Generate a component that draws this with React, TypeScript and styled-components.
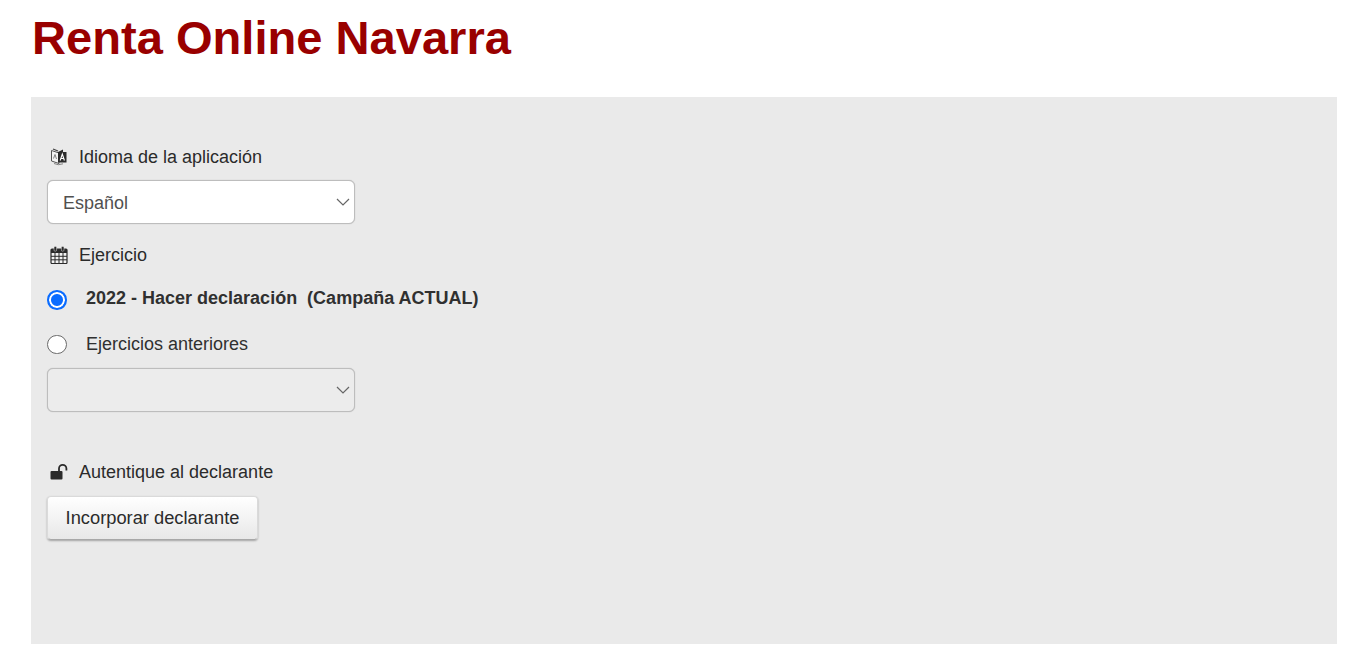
import React from 'react';
import styled, { createGlobalStyle } from 'styled-components';

const GlobalStyle = createGlobalStyle`
  html, body {
    margin: 0;
    padding: 0;
    background: #ffffff;
    font-family: "Liberation Sans", Arial, sans-serif;
    overflow: hidden;
  }
`;

const Page = styled.div`
  height: 654px;
  padding: 0 29px 10px 31px;
  box-sizing: border-box;
  display: flex;
  flex-direction: column;
`;

const Title = styled.h1`
  margin: 0;
  height: 97px;
  padding: 10px 0 0 1px;
  box-sizing: border-box;
  color: #990000;
  font-size: 47.1px;
  line-height: 56px;
  font-weight: 700;
`;

const Panel = styled.main`
  flex: 1;
  background: #eaeaea;
  padding: 47px 16px 0;
  display: flex;
  flex-direction: column;
  align-items: flex-start;
`;

const Label = styled.div<{ $top?: number }>`
  display: flex;
  align-items: center;
  height: 26px;
  margin-top: ${(p) => p.$top ?? 0}px;
  color: #2b2b2b;
  font-size: 18px;
`;

const LabelIcon = styled.span`
  width: 32px;
  display: flex;
  justify-content: center;
  padding-right: 8px;
  box-sizing: border-box;
`;

const SelectWrap = styled.div<{ $top: number }>`
  position: relative;
  width: 308px;
  height: 44px;
  margin-top: ${(p) => p.$top}px;
`;

const Select = styled.select`
  appearance: none;
  width: 100%;
  height: 100%;
  box-sizing: border-box;
  padding: 2px 15px 0;
  border: 1px solid #bdbdbd;
  border-radius: 6px;
  background: #ffffff;
  box-shadow: 0 0 1px rgba(0, 0, 0, 0.25);
  color: #505050;
  font-family: inherit;
  font-size: 18px;
  opacity: 1;

  &:disabled {
    background: #ececec;
    color: #505050;
  }
`;

const Chevron = styled.svg`
  position: absolute;
  top: 18px;
  right: 5px;
  pointer-events: none;
`;

const RadioRow = styled.label<{ $top: number; $bold?: boolean }>`
  display: flex;
  align-items: center;
  height: 26px;
  margin-top: ${(p) => p.$top}px;
  color: #303030;
  font-size: 18px;
  font-weight: ${(p) => (p.$bold ? 700 : 400)};
  white-space: pre;
`;

const Radio = styled.input<{ $drop: number }>`
  appearance: none;
  width: 19.5px;
  height: 19.5px;
  margin: ${(p) => p.$drop}px 19.5px 0 0;
  box-sizing: border-box;
  border: 1px solid #6a6a6a;
  border-radius: 50%;
  background: #ffffff;

  &:checked {
    border: 2px solid #0a6cff;
    box-shadow: inset 0 0 0 2px #ffffff;
    background: #0a6cff;
  }
`;

const Button = styled.button`
  margin-top: 11px;
  width: 211px;
  height: 44px;
  padding: 0;
  border: 1px solid #dadada;
  border-bottom-color: #a8a8a8;
  border-radius: 4px;
  background: linear-gradient(#ffffff, #e8e8e8);
  box-shadow: 0 1px 2px rgba(0, 0, 0, 0.3);
  color: #2b2b2b;
  font-family: inherit;
  font-size: 18.3px;
`;

const SelectArrow = () => (
  <Chevron width="14" height="8" viewBox="0 0 14 8" fill="none" stroke="#666" strokeWidth="1.2">
    <path d="M1 1 L7 7 L13 1" />
  </Chevron>
);

// glyphs drawn by hand, the package icons are not close enough
const LanguageIcon = () => (
  <svg width="18" height="18" viewBox="0 0 18 18">
    <path d="M1.5 2.5 L9 5 V15.5 L1.5 13 Z" fill="#f4f4f4" stroke="#555" strokeWidth="1" />
    <path d="M3 1 L8 3" fill="none" stroke="#444" strokeWidth="1.2" />
    <path d="M8 4 L13 1.5 V4 H16.5 V14.5 H8 Z" fill="#2b2b2b" />
    <path d="M10.2 12.5 L12.3 6 L14.4 12.5 M11 10.5 H13.6" fill="none" stroke="#fff" strokeWidth="1.1" />
    <path d="M3.5 10.5 L5 6.5 L6.5 11" fill="none" stroke="#666" strokeWidth="0.8" />
    <path d="M4 15.5 Q8 17.8 13 15.8" fill="none" stroke="#777" strokeWidth="0.9" />
  </svg>
);

const CalendarIcon = () => (
  <svg width="18" height="18" viewBox="0 0 18 18">
    <rect x="1" y="3" width="16" height="14.5" rx="1" fill="#f2f2f2" stroke="#2b2b2b" strokeWidth="1.2" />
    <rect x="1" y="3" width="16" height="4" fill="#2b2b2b" />
    <rect x="4" y="0.4" width="2.6" height="4.8" rx="1.1" fill="#2b2b2b" stroke="#e9e9e9" strokeWidth="0.5" />
    <rect x="11.4" y="0.4" width="2.6" height="4.8" rx="1.1" fill="#2b2b2b" stroke="#e9e9e9" strokeWidth="0.5" />
    <path d="M5 7 V17 M9 7 V17 M13 7 V17 M1 10.3 H17 M1 13.8 H17" stroke="#2b2b2b" strokeWidth="1" />
  </svg>
);

const UnlockIcon = () => (
  <svg width="18" height="18" viewBox="0 0 18 18">
    <rect x="0.5" y="8" width="12" height="8.5" rx="1" fill="#2b2b2b" />
    <path d="M9 8 V5.5 A3.7 3.7 0 0 1 16.4 5.5 V7.5" fill="none" stroke="#2b2b2b" strokeWidth="1.8" />
  </svg>
);

const App: React.FC = () => {
  return (
    <Page>
      <GlobalStyle />
      <Title>Renta Online Navarra</Title>
      <Panel>
        <Label>
          <LabelIcon><LanguageIcon /></LabelIcon>
          Idioma de la aplicación
        </Label>
        <SelectWrap $top={10}>
          <Select defaultValue="es">
            <option value="es">Español</option>
          </Select>
          <SelectArrow />
        </SelectWrap>
        <Label $top={18}>
          <LabelIcon><CalendarIcon /></LabelIcon>
          Ejercicio
        </Label>
        <RadioRow $top={17} $bold>
          <Radio type="radio" name="ejercicio" $drop={4} defaultChecked />
          {'2022 - Hacer declaración  (Campaña ACTUAL)'}
        </RadioRow>
        <RadioRow $top={20}>
          <Radio type="radio" name="ejercicio" $drop={1} />
          Ejercicios anteriores
        </RadioRow>
        <SelectWrap $top={11}>
          <Select disabled />
          <SelectArrow />
        </SelectWrap>
        <Label $top={47}>
          <LabelIcon><UnlockIcon /></LabelIcon>
          Autentique al declarante
        </Label>
        <Button>Incorporar declarante</Button>
      </Panel>
    </Page>
  );
};

export default App;
